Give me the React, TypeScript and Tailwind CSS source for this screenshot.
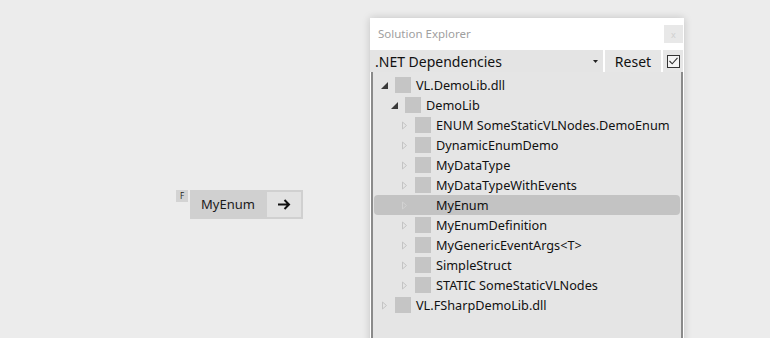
import React from 'react';

type Row = { label: string; level: number; open?: boolean; selected?: boolean };

const ROWS: Row[] = [
  { label: 'VL.DemoLib.dll', level: 0, open: true },
  { label: 'DemoLib', level: 1, open: true },
  { label: 'ENUM SomeStaticVLNodes.DemoEnum', level: 2 },
  { label: 'DynamicEnumDemo', level: 2 },
  { label: 'MyDataType', level: 2 },
  { label: 'MyDataTypeWithEvents', level: 2 },
  { label: 'MyEnum', level: 2, selected: true },
  { label: 'MyEnumDefinition', level: 2 },
  { label: 'MyGenericEventArgs<T>', level: 2 },
  { label: 'SimpleStruct', level: 2 },
  { label: 'STATIC SomeStaticVLNodes', level: 2 },
  { label: 'VL.FSharpDemoLib.dll', level: 0 },
];

const font = { fontFamily: '"Noto Sans", "Open Sans", sans-serif' };

const Expander = ({ open, selected }: { open?: boolean; selected?: boolean }) =>
  open ? (
    <svg width="7" height="7" viewBox="0 0 7 7" className="shrink-0">
      <path d="M7 0 L7 7 L0 7 Z" fill="#3a3a3a" />
    </svg>
  ) : (
    <svg width="7" height="9" viewBox="0 0 7 9" className="shrink-0">
      <path d="M1.5 1 L5.5 4.5 L1.5 8 Z" fill="none" stroke={selected ? '#d2d2d2' : '#c4c4c4'} strokeWidth="1" />
    </svg>
  );

const TreeRow = ({ row }: { row: Row }) => (
  <div
    className={`flex items-center h-5 rounded-sm ${row.selected ? 'bg-[#c3c3c3]' : ''}`}
    style={{ paddingLeft: 7 + row.level * 10 }}
  >
    <div className="w-[12px] flex items-center">
      <Expander open={row.open} selected={row.selected} />
    </div>
    <div className={`w-4 h-4 ml-[2px] shrink-0 ${row.selected ? '' : 'bg-[#c5c5c5]'}`} />
    <span className="ml-[5px] text-[12.7px] text-[#111] whitespace-nowrap leading-none">{row.label}</span>
  </div>
);

export default function App() {
  return (
    <div className="relative w-[770px] h-[338px] bg-[#ececec] overflow-hidden" style={font}>
      {/* node on the canvas */}
      <div className="absolute left-[176px] top-[190px] flex items-start">
        <div className="w-3 h-3 bg-[#d3d3d3] text-[8px] text-[#222] flex items-center justify-center leading-none">
          F
        </div>
        <div className="ml-[2px] w-[113px] h-[29px] bg-[#d0d0d0] flex items-center">
          <span className="pl-[11px] text-[13px] text-[#1a1a1a] flex-1">MyEnum</span>
          <div className="w-[34px] h-[25px] mr-[2px] bg-[#e2e2e2] flex items-center justify-center">
            <svg width="13" height="11" viewBox="0 0 13 11">
              <path d="M0 5.5 H11 M6.5 1 L11 5.5 L6.5 10" fill="none" stroke="#111" strokeWidth="2" />
            </svg>
          </div>
        </div>
      </div>

      {/* solution explorer window */}
      <div className="absolute left-[370px] top-[18px] w-[314px] h-[340px] bg-white shadow-[0_0_8px_rgba(0,0,0,0.18)] flex flex-col">
        <div className="h-8 flex items-center justify-between pl-2 pr-[1px]">
          <span className="text-[11.5px] text-[#a0a0a0]">Solution Explorer</span>
          <div className="w-[19px] h-[18px] bg-[#e8e8e8] flex items-center justify-center text-[9px] text-[#d0d0d0] leading-none">
            x
          </div>
        </div>
        <div className="h-[22px] flex items-stretch gap-[2px] pr-[1px]">
          <div className="flex-1 bg-[#e4e4e4] flex items-center justify-between pl-[5px] pr-[5px]">
            <span className="text-[14px] text-[#111]">.NET Dependencies</span>
            <svg width="5" height="3" viewBox="0 0 5 3">
              <path d="M0 0 H5 L2.5 3 Z" fill="#222" />
            </svg>
          </div>
          <div className="w-[56px] bg-[#e6e6e6] flex items-center justify-center text-[14px] text-[#111]">Reset</div>
          <div className="w-[20px] bg-[#e6e6e6] flex items-center justify-center">
            <div className="w-[13px] h-[13px] border border-[#333] bg-[#f4f4f4] flex items-center justify-center">
              <svg width="9" height="8" viewBox="0 0 9 8">
                <path d="M0.5 4 L3.2 6.8 L8.5 0.8" fill="none" stroke="#333" strokeWidth="1.1" />
              </svg>
            </div>
          </div>
        </div>
        <div className="flex-1 ml-[1px] mr-[1px] border-l-2 border-r-2 border-[#8a8a8a] bg-[#e5e5e5] pt-[3px] px-[1px]">
          {ROWS.map((r) => (
            <TreeRow key={r.label} row={r} />
          ))}
        </div>
      </div>
    </div>
  );
}
